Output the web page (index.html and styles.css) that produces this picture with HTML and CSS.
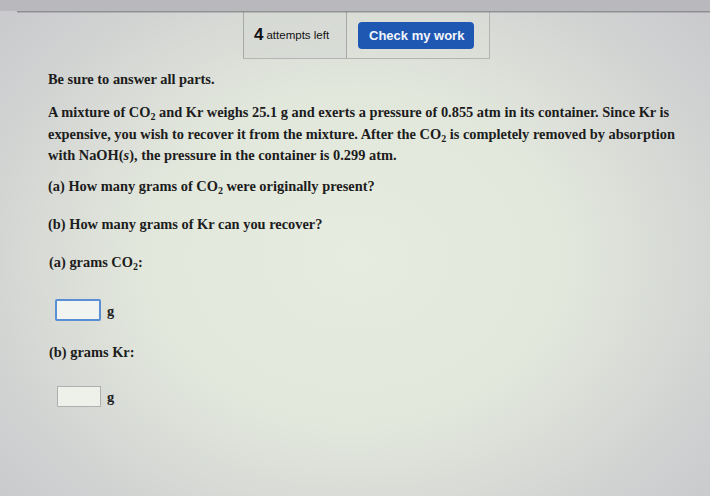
FILE: index.html
```html
<!DOCTYPE html>
<html lang="en">
<head>
    <meta charset="UTF-8">
    <meta name="viewport" content="width=device-width, initial-scale=1.0">
    <title>Question 4</title>
    <link rel="stylesheet" href="styles.css">
</head>
<body>
    <div class="topstrip"></div>
    <div class="page">
        <div class="toolbar">
            <div class="cell attempts"><span class="count">4</span> attempts left</div>
            <div class="cell">
                <button class="check">Check my work</button>
            </div>
        </div>

        <div class="question">
            <p class="note">Be sure to answer all parts.</p>

            <p class="stem">A mixture of CO<sub>2</sub> and Kr weighs 25.1 g and exerts a pressure of 0.855 atm in its container. Since Kr is expensive, you wish to recover it from the mixture. After the CO<sub>2</sub> is completely removed by absorption with NaOH(<i>s</i>), the pressure in the container is 0.299 atm.</p>

            <p class="part">(a) How many grams of CO<sub>2</sub> were originally present?</p>
            <p class="part">(b) How many grams of Kr can you recover?</p>

            <p class="label">(a) grams CO<sub>2</sub>:</p>
            <div class="answer">
                <input class="field focused" type="text"> <span class="unit">g</span>
            </div>

            <p class="label">(b) grams Kr:</p>
            <div class="answer">
                <input class="field" type="text"> <span class="unit">g</span>
            </div>
        </div>
    </div>
</body>
</html>
```

FILE: styles.css
```css
html, body {
    height: 100%;
}
body {
    margin: 0;
    font-family: "Liberation Serif", "Times New Roman", serif;
    color: #1c1c1c;
    background:
        radial-gradient(ellipse 75% 85% at 50% 52%, #e6ecdf 0%, #e2e7dc 40%, rgba(214, 216, 214, 0.6) 75%, rgba(200, 200, 204, 0) 100%),
        #c5c5c9;
    overflow: hidden;
}
/* grey band above the page, with the page's top shadow starting a little in */
.topstrip {
    height: 11px;
    background: #b9b9bd;
    position: relative;
}
.topstrip::after {
    content: "";
    position: absolute;
    left: 17px;
    right: 0;
    bottom: -2px;
    height: 2px;
    background: linear-gradient(#7e7e82, rgba(140, 140, 144, 0.2));
}
.page {
    margin-left: 17px;
}
.toolbar {
    display: flex;
    height: 48px;
    padding-left: 226px;
}
.cell {
    display: flex;
    align-items: center;
    border-left: 1px solid #a7a8a8;
    border-bottom: 1px solid #b4b5b3;
    background: rgba(214, 217, 212, 0.6);
}
.cell + .cell {
    border-right: 1px solid #b4b5b3;
    padding: 0 15px 0 11px;
    background: rgba(220, 224, 216, 0.5);
}
.attempts {
    width: 92px;
    padding-left: 10px;
    font-family: "Liberation Sans", Arial, sans-serif;
    font-size: 11.5px;
    color: #111;
}
.count {
    font-size: 17px;
    font-weight: bold;
    margin-right: 3px;
}
.check {
    font-family: "Liberation Sans", Arial, sans-serif;
    font-size: 13px;
    font-weight: bold;
    color: #f4f6fb;
    background: #1e58b3;
    border: none;
    border-radius: 4px;
    padding: 6px 10px 6px 11px;
    height: 27px;
    margin-top: 1px;
}
.question {
    padding: 12px 0 0 31px;
    font-weight: bold;
    font-size: 14.4px;
    line-height: 16px;
    width: 640px;
}
.question p {
    margin: 0;
}
.note {
    margin-bottom: 15px !important;
}
.stem {
    line-height: 21.5px;
    margin-bottom: 11px !important;
}
sub {
    font-size: 10px;
    line-height: 0;
    vertical-align: -3px;
}
.part {
    margin-bottom: 22px !important;
}
.label {
    padding-left: 1px;
}
.answer {
    display: flex;
    align-items: flex-end;
    gap: 6px;
    padding: 29px 0 23px 7px;
}
.answer + .label + .answer {
    padding-top: 26px;
}
.field {
    box-sizing: border-box;
    width: 44px;
    height: 21px;
    margin: 0 0 0 2px;
    border: 1px solid #aeb0ae;
    background: #eef1ea;
}
.field.focused {
    width: 46px;
    height: 22px;
    margin-left: 0;
    border: 2px solid #5a8fd6;
    border-radius: 2px;
    background: #f2f4f2;
}
.unit {
    font-size: 14.4px;
    line-height: 14px;
    padding-bottom: 3px;
}
```
